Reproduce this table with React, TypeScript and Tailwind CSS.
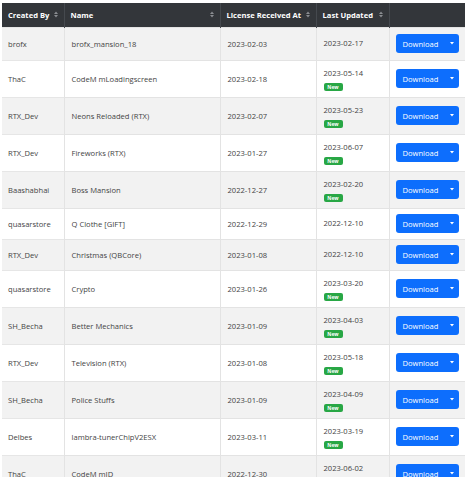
import React from "react";

type Row = { by: string; name: string; rec: string; upd: string; isNew: boolean };

const rows: Row[] = [
  { by: "brofx", name: "brofx_mansion_18", rec: "2023-02-03", upd: "2023-02-17", isNew: false },
  { by: "ThaC", name: "CodeM mLoadingscreen", rec: "2023-02-18", upd: "2023-05-14", isNew: true },
  { by: "RTX_Dev", name: "Neons Reloaded (RTX)", rec: "2023-02-07", upd: "2023-05-23", isNew: true },
  { by: "RTX_Dev", name: "Fireworks (RTX)", rec: "2023-01-27", upd: "2023-06-07", isNew: true },
  { by: "Baashabhai", name: "Boss Mansion", rec: "2022-12-27", upd: "2023-02-20", isNew: true },
  { by: "quasarstore", name: "Q Clothe [GIFT]", rec: "2022-12-29", upd: "2022-12-10", isNew: false },
  { by: "RTX_Dev", name: "Christmas (QBCore)", rec: "2023-01-08", upd: "2022-12-10", isNew: false },
  { by: "quasarstore", name: "Crypto", rec: "2023-01-26", upd: "2023-03-20", isNew: true },
  { by: "SH_Becha", name: "Better Mechanics", rec: "2023-01-09", upd: "2023-04-03", isNew: true },
  { by: "RTX_Dev", name: "Television (RTX)", rec: "2023-01-08", upd: "2023-05-18", isNew: true },
  { by: "SH_Becha", name: "Police Stuffs", rec: "2023-01-09", upd: "2023-04-09", isNew: true },
  { by: "Delbes", name: "lambra-tunerChipV2ESX", rec: "2023-03-11", upd: "2023-03-19", isNew: true },
  { by: "ThaC", name: "CodeM mID", rec: "2022-12-30", upd: "2023-06-02", isNew: true },
];

function SortIcon() {
  return (
    <svg width="4" height="7" viewBox="0 0 4 7" className="shrink-0">
      <path d="M0 3 L2 0.5 L4 3 Z" fill="#8a8d91" />
      <path d="M0 4 L2 6.5 L4 4 Z" fill="#8a8d91" />
    </svg>
  );
}

function Th({ label, w, icon = true }: { label: string; w: string; icon?: boolean }) {
  return (
    <th className={`${w} h-[24px] px-[6px] border-l border-[#45494e] first:border-l-0 text-left font-bold text-white align-middle`}>
      <div className="flex items-center justify-between">
        <span>{label}</span>
        {icon && <SortIcon />}
      </div>
    </th>
  );
}

function DownloadButton() {
  return (
    <div className="flex h-[19px] w-[63px] rounded-[3px] bg-[#0d6efd] text-white overflow-hidden">
      <div className="flex items-center pl-[7px] pr-[3px] flex-1">Download</div>
      <div className="flex items-center justify-center w-[14px]">
        <svg width="4" height="3" viewBox="0 0 4 3">
          <path d="M0 0 L4 0 L2 2.5 Z" fill="#ffffff" />
        </svg>
      </div>
    </div>
  );
}

export default function App() {
  return (
    <div className="w-[474px] h-[477px] overflow-hidden bg-white pt-[3px] pl-[2px]" style={{ fontFamily: '"Open Sans", "Noto Sans", sans-serif' }}>
      <table className="w-[463px] table-fixed border-collapse text-[7.6px] leading-[12px] text-[#444]">
        <thead>
          <tr className="bg-[#33363a]">
            <Th label="Created By" w="w-[62px]" />
            <Th label="Name" w="w-[156px]" />
            <Th label="License Received At" w="w-[96px]" />
            <Th label="Last Updated" w="w-[73px]" />
            <Th label="" w="w-[76px]" icon={false} />
          </tr>
        </thead>
        <tbody>
          {rows.map((r, i) => (
            <tr
              key={i}
              className={`${i % 2 === 0 ? "bg-[#f2f2f2]" : "bg-white"} ${i === 0 ? "h-[33px]" : r.isNew ? "h-[37px]" : "h-[31px]"}`}
            >
              <td className="px-[6px] py-0 border-t border-[#e6e6e6] align-middle">{r.by}</td>
              <td className="px-[7px] py-0 border-t border-l border-[#e3e3e3] align-middle">{r.name}</td>
              <td className="px-[7px] py-0 border-t border-l border-[#e3e3e3] align-middle">{r.rec}</td>
              <td className="px-[7px] py-0 border-t border-l border-[#e3e3e3] align-middle">
                <div className="flex flex-col items-start">
                  <span className="leading-[13px]">{r.upd}</span>
                  {r.isNew && (
                    <span className="mt-[3px] h-[8px] w-[19px] rounded-[2px] bg-[#28a745] text-white text-[5px] leading-[8px] font-bold text-center">
                      New
                    </span>
                  )}
                </div>
              </td>
              <td className="px-[6px] py-0 border-t border-l border-[#e3e3e3] align-middle">
                <DownloadButton />
              </td>
            </tr>
          ))}
        </tbody>
      </table>
    </div>
  );
}
